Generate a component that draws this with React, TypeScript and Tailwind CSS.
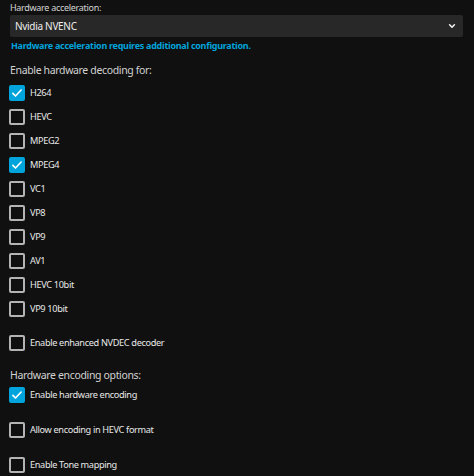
const decoders = [
  { name: "H264", checked: true },
  { name: "HEVC", checked: false },
  { name: "MPEG2", checked: false },
  { name: "MPEG4", checked: true },
  { name: "VC1", checked: false },
  { name: "VP8", checked: false },
  { name: "VP9", checked: false },
  { name: "AV1", checked: false },
  { name: "HEVC 10bit", checked: false },
  { name: "VP9 10bit", checked: false },
];

const Box = ({ checked }: { checked: boolean }) =>
  checked ? (
    <span className="flex h-4 w-4 shrink-0 items-center justify-center rounded-[2px] bg-[#00a4dc]">
      <svg viewBox="0 0 16 16" className="h-3 w-3" fill="none" stroke="#fff" strokeWidth="2.2" strokeLinecap="round" strokeLinejoin="round">
        <path d="M2.5 8.5l3.5 3.5 7.5-8" />
      </svg>
    </span>
  ) : (
    <span className="h-4 w-4 shrink-0 rounded-[2px] border-2 border-[#b4b4b4]" />
  );

const Row = ({ label, checked, className = "" }: { label: string; checked: boolean; className?: string }) => (
  <label className={`flex h-6 items-center gap-[5px] pl-[9px] text-[9.2px] tracking-[-0.35px] text-[#e8e8e8] ${className}`}>
    <Box checked={checked} />
    <span>{label}</span>
  </label>
);

export default function App() {
  return (
    <div className="h-[476px] w-full overflow-hidden bg-[#101010] font-['Noto_Sans',sans-serif]">
      <div className="flex h-[15px] items-center pl-[10px] pt-[1px] text-[9px] tracking-[-0.3px] text-[#d4d4d4]">Hardware acceleration:</div>
      <div className="ml-[10px] mr-[11px] flex h-[22px] items-center justify-between rounded-[2px] bg-[#282828] pl-[5px] pr-[7px] text-[10px] tracking-[-0.3px] text-[#eeeeee]">
        <span>Nvidia NVENC</span>
        <svg viewBox="0 0 10 10" className="h-[8px] w-[8px]" fill="none" stroke="#f0f0f0" strokeWidth="2" strokeLinecap="round" strokeLinejoin="round">
          <path d="M2 3.5l3 3 3-3" />
        </svg>
      </div>
      <div className="flex h-[18px] items-center pl-[11px] text-[9px] font-bold tracking-[-0.28px] text-[#00a4dc]">
        Hardware acceleration requires additional configuration.
      </div>
      <div className="mt-[6px] flex h-5 items-center pl-[10px] text-[10.5px] tracking-[-0.35px] text-[#d2d2d2]">Enable hardware decoding for:</div>
      {decoders.map((d) => (
        <Row key={d.name} label={d.name} checked={d.checked} />
      ))}
      <Row label="Enable enhanced NVDEC decoder" checked={false} className="mt-[10px]" />
      <div className="mt-[13px] flex h-[15px] items-center pl-[10px] text-[10.5px] tracking-[-0.35px] text-[#d2d2d2]">Hardware encoding options:</div>
      <Row label="Enable hardware encoding" checked={true} />
      <Row label="Allow encoding in HEVC format" checked={false} className="mt-[11px]" />
      <Row label="Enable Tone mapping" checked={false} className="mt-[11px]" />
    </div>
  );
}
